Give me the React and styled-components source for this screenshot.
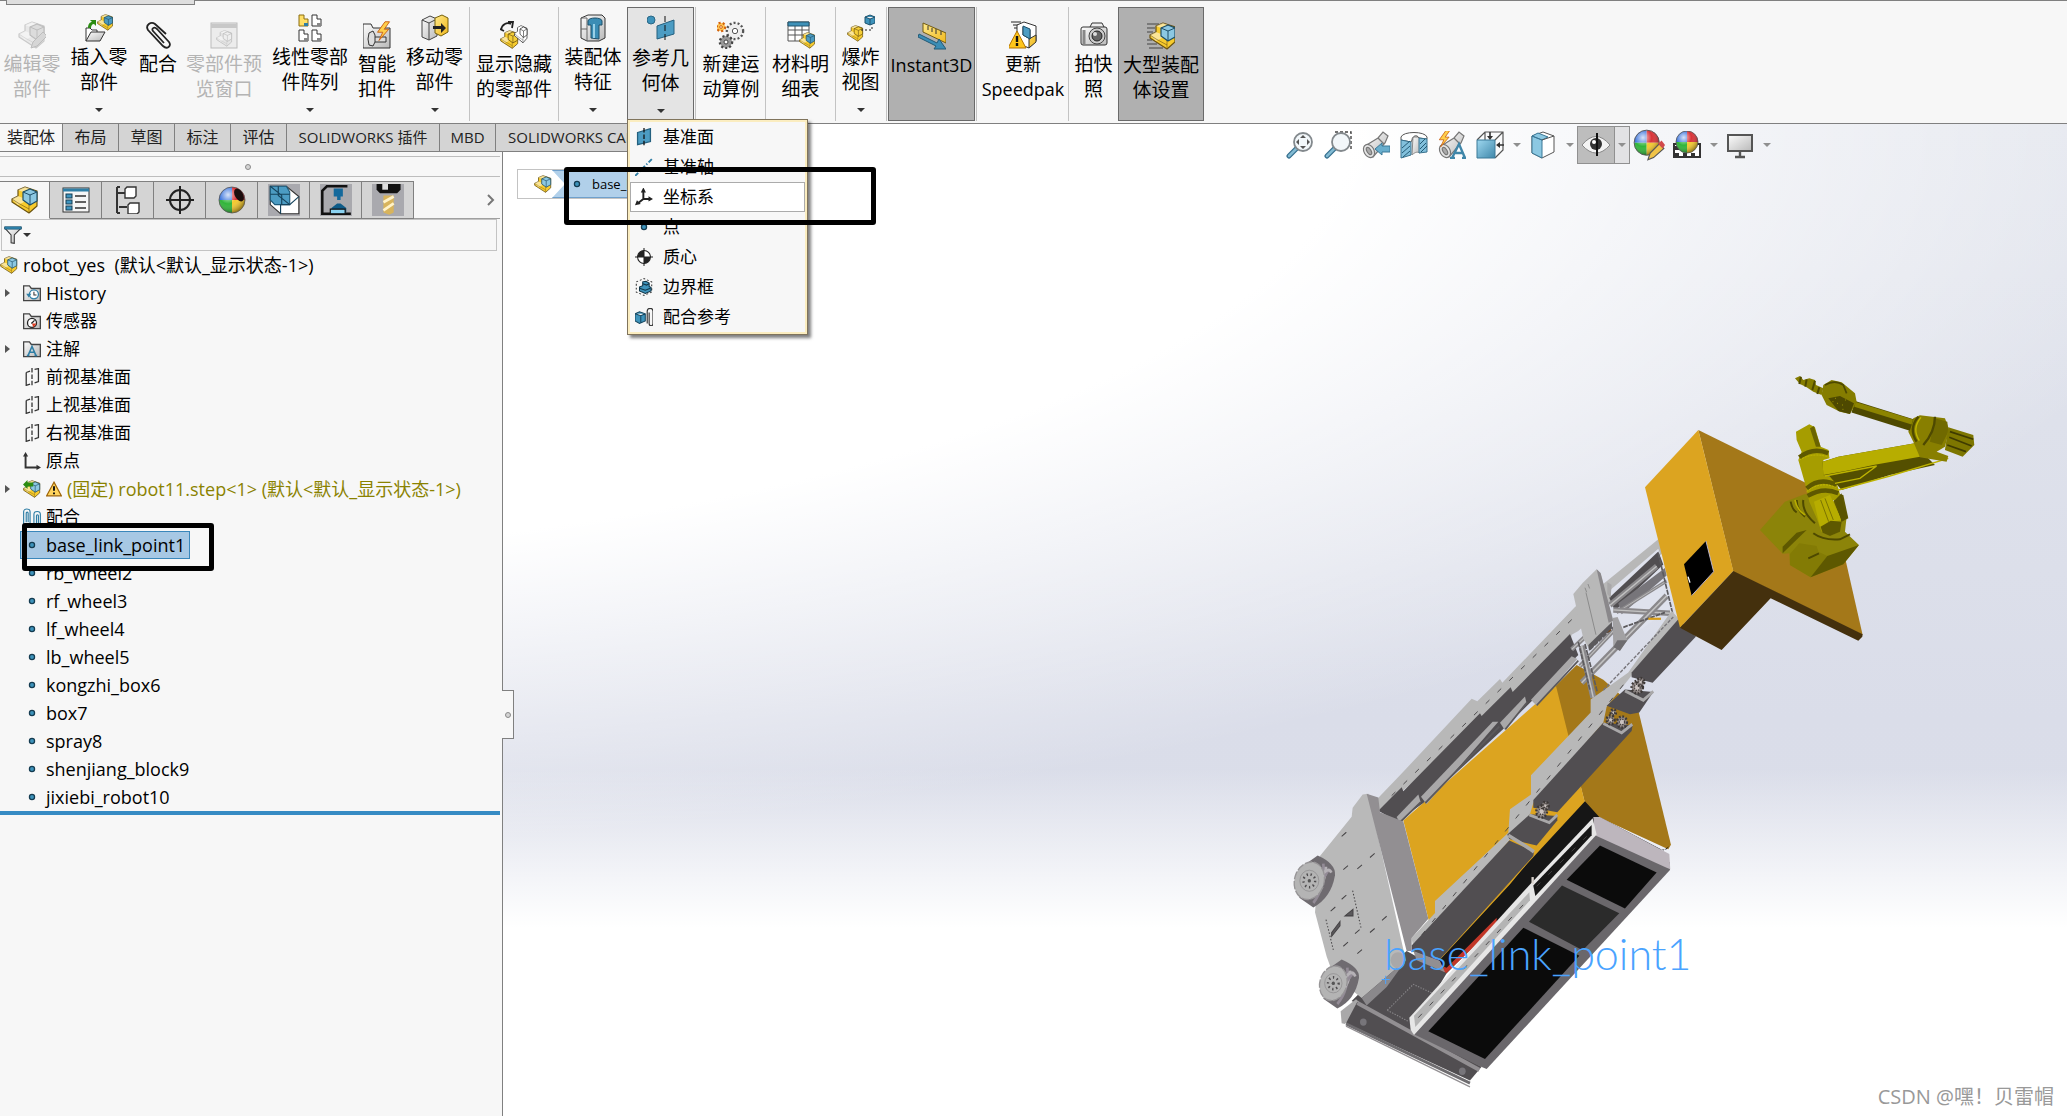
import React, { useState } from "react";
import styled, { createGlobalStyle } from "styled-components";

const GlobalStyle = createGlobalStyle`
  * {
    box-sizing: border-box;
  }
  body {
    margin: 0;
    background: #f7f7f7;
    color: #000;
    font-family: "Open Sans", "Noto Sans CJK SC", sans-serif;
  }
  button, input {
    font: inherit;
    color: inherit;
    margin: 0;
  }
  svg {
    display: block;
    flex: none;
  }
`;

/* ---------- icons ---------- */

const Svg = ({ size = 28, children, ...rest }) => (
  <svg width={size} height={size} viewBox="0 0 28 28" fill="none" aria-hidden="true" {...rest}>
    {children}
  </svg>
);

const HiddenSvg = styled.svg`
  position: absolute;
`;

const Defs = () => (
  <HiddenSvg width="0" height="0" aria-hidden="true">
    <defs>
      <linearGradient id="yel" x1="0" y1="0" x2="1" y2="1">
        <stop offset="0" stopColor="#ffe98a" />
        <stop offset="1" stopColor="#f0b81c" />
      </linearGradient>
      <linearGradient id="blu" x1="0" y1="0" x2="1" y2="1">
        <stop offset="0" stopColor="#9ed8f0" />
        <stop offset="1" stopColor="#3f87aa" />
      </linearGradient>
      <linearGradient id="gry" x1="0" y1="0" x2="1" y2="1">
        <stop offset="0" stopColor="#fdfdfd" />
        <stop offset="1" stopColor="#b9b9b9" />
      </linearGradient>
      <radialGradient id="shine" cx=".35" cy=".3" r=".7">
        <stop offset="0" stopColor="#fff" stopOpacity=".8" />
        <stop offset=".5" stopColor="#fff" stopOpacity="0" />
        <stop offset="1" stopColor="#000" stopOpacity=".35" />
      </radialGradient>
    </defs>
  </HiddenSvg>
);

const Block = ({ body = "#f7cb2d", cube = "#8cc8e2", line = "#6b5310", edge = "#1e4f69" }) => (
  <g strokeLinejoin="round">
    <path d="M1 13l6-3V4l7-3 12 4v15l-8 7L1 16z" fill={body} stroke={line} strokeWidth="1.2" />
    <path d="M1 13l6-3 5 2 1 4-6 3zM7 4l7-3 5 2-7 3z" fill="#fff" fillOpacity=".5" />
    <path d="M1 13l6 4 11 6M18 27v-9" stroke={line} strokeWidth=".6" />
    <path d="M12 6l7-3 7 3v9l-7 4-7-5z" fill={cube} stroke={edge} strokeWidth="1.2" />
    <path d="M12 6l7 3 7-3M19 9v10" stroke={edge} strokeWidth="1" />
  </g>
);

const Bolt = () => (
  <path d="M12 1L2 15h7L4 26 17 11h-6l7-10z" fill="#ffcf4a" stroke="#c65a10" strokeWidth="1.2" />
);

const Lens = () => (
  <>
    <path d="M3 25l7-7" stroke="#356f8f" strokeWidth="5" strokeLinecap="round" />
    <path d="M3 25l7-7" stroke="#82bad2" strokeWidth="2.5" strokeLinecap="round" />
    <circle cx="17" cy="11" r="9" fill="#f2f7fa" stroke="#83898d" strokeWidth="1.8" />
  </>
);

const Scope = () => (
  <g stroke="#777" strokeWidth="1.2">
    <path d="M3 15L16 7l5-6 5 4-3 7-12 14z" fill="url(#gry)" />
    <path d="M16 7l6 6" />
    <ellipse cx="7" cy="20" rx="5" ry="7" transform="rotate(-30 7 20)" fill="#e6e6e6" />
    <ellipse cx="7" cy="20" rx="2" ry="4" transform="rotate(-30 7 20)" fill="#aaa" />
  </g>
);

const Ball = ({ r = 13, cx = 14, cy = 14 }) => (
  <g transform={`translate(${cx} ${cy})`}>
    <path d={`M0 0V${-r}A${r} ${r} 0 0 0 ${-r} 0z`} fill="#3b74dd" />
    <path d={`M0 0H${r}A${r} ${r} 0 0 0 0 ${-r}z`} fill="#d93338" />
    <path d={`M0 0H${-r}A${r} ${r} 0 0 0 0 ${r}z`} fill="#31b53a" />
    <path d={`M0 0V${r}A${r} ${r} 0 0 0 ${r} 0z`} fill="#f4c92e" />
    <circle r={r} fill="url(#shine)" stroke="#555" strokeWidth=".8" />
  </g>
);

const Folder = ({ children }) => (
  <Svg size={18}>
    <path d="M1 26V3h9l3 4h14v19z" fill="url(#gry)" stroke="#444" strokeWidth="2" />
    {children}
  </Svg>
);

const gear = (cx, cy, r, fill, line) => (
  <g>
    <circle cx={cx} cy={cy} r={r} fill={fill} stroke={line} strokeWidth="2.6" strokeDasharray="2 2" />
    <circle cx={cx} cy={cy} r={r - 1} fill={fill} />
    <circle cx={cx} cy={cy} r={r / 3} fill="#fff" stroke={line} />
  </g>
);

const icons = {
  edit: (
    <Svg opacity=".75">
      <Block body="#e4e4e4" cube="#d4d4d4" line="#bbb" edge="#aaa" />
      <path d="M13 27l2-6 10-10 4 4-10 10z" fill="#ccc" stroke="#aaa" />
    </Svg>
  ),
  insert: (
    <Svg>
      <g transform="translate(12 0) scale(.6)"><Block cube="#4b9ac0" /></g>
      <path d="M1 27V14h4l2 2h5v3" fill="#fff" stroke="#333" />
      <path d="M1 27l5-9h14l-5 9z" fill="url(#gry)" stroke="#333" />
      <path d="M3 14c0-4 2-6 4-6L5 6h6v6L9 10c-2 0-3 2-3 4z" fill="#2b8c12" />
    </Svg>
  ),
  clip: (
    <Svg>
      <path
        d="M21 12L10 2C6-1 0 3 3 8l15 16c4 4 9 0 6-4L12 7C9 4 6 7 8 9l11 12"
        transform="translate(1 1)"
        stroke="#222"
        strokeWidth="1.8"
      />
    </Svg>
  ),
  preview: (
    <Svg>
      <rect x="1" y="2" width="26" height="25" fill="#ececec" stroke="#bbb" />
      <path d="M1 5h26" stroke="#c8c8c8" strokeWidth="4" />
      <g transform="translate(6 9) scale(.6)"><Block body="#e4e4e4" cube="#eee" line="#bbb" edge="#bbb" /></g>
    </Svg>
  ),
  pattern: (
    <Svg>
      {[[3, 1], [16, 1], [3, 16], [16, 16]].map(([x, y], i) => (
        <g key={i} transform={`translate(${x} ${y})`}>
          <path d="M0 0h5v4h4v7H0z" fill={i ? "#fff" : "#ffdf65"} stroke={i ? "#333" : "#8a6d10"} />
          <path d="M5 8h4v3H5z" fill={i ? "#888" : "#2f7ea5"} />
        </g>
      ))}
    </Svg>
  ),
  fastener: (
    <Svg>
      <path d="M0 27V3h8l2 4h17v20z" fill="url(#gry)" stroke="#333" />
      <path d="M6 12l4-2 2 4v7l-2 4-4-1-1-6zM12 16h11v5H12" fill="#ddd" stroke="#333" />
      <g transform="translate(13 0) scale(.75)"><Bolt /></g>
    </Svg>
  ),
  move: (
    <Svg>
      <path d="M1 6l8-4 7 3v17l-8 4-7-3z" fill="url(#gry)" stroke="#444" />
      <path d="M1 6l7 3 8-4M8 9v17" stroke="#444" />
      <path d="M14 4l7-3 6 3v14l-7 4-6-3z" fill="url(#yel)" stroke="#75600c" />
      <path d="M12 12h8V9l5 5-5 5v-4h-8z" fill="#222" />
    </Svg>
  ),
  showHide: (
    <Svg>
      <g transform="translate(0 9) scale(.68)"><Block cube="#f5cf38" edge="#6b5310" /></g>
      <g transform="translate(14 4) scale(.5 .66)"><Block body="#fff" cube="#fff" line="#222" edge="#222" /></g>
      <path d="M1 9c1-6 6-8 10-6M12 7L13 1 8 1M4 10L0 8" stroke="#222" strokeWidth="1.8" />
    </Svg>
  ),
  feature: (
    <Svg>
      <path d="M2 4l7-3h14l3 3v20l-6 3H8l-6-3z" fill="url(#gry)" stroke="#333" />
      <path d="M2 4h6v23M2 15h6" stroke="#666" />
      <path d="M9 7c0-4 14-4 14 0v4h-3v14l-8-1V11H9z" fill="#3b8db5" stroke="#1d506b" />
      <path d="M15 10v14" stroke="#99d1e8" strokeWidth="2" />
    </Svg>
  ),
  refGeo: (
    <Svg>
      <circle cx="4" cy="5" r="4" fill="#3e93bb" stroke="#2b6886" />
      <path d="M10 11l17-6v14l-17 5z" fill="#4c9cc3" stroke="#24607f" />
      <path d="M18 1v26" stroke="#111" strokeDasharray="6 3" />
    </Svg>
  ),
  motion: (
    <Svg>
      {gear(18, 10, 8, "#eee", "#555")}
      {gear(9, 21, 6, "#999", "#444")}
      {gear(4, 6, 4, "#ffc552", "#d4640e")}
    </Svg>
  ),
  bom: (
    <Svg>
      <path d="M1 1h21v19H1zM1 9h21M1 14h21M8 5v15M15 5v15" fill="#fff" stroke="#555" />
      <path d="M1 1h21v4H1z" fill="#3f92b9" stroke="#24546d" />
      <g transform="translate(12 11) scale(.6)"><Block cube="#4b9ac0" /></g>
    </Svg>
  ),
  explode: (
    <Svg>
      <g transform="translate(0 11) scale(.6)"><Block cube="#f5cf38" edge="#6b5310" /></g>
      <path d="M18 3l5-2 5 2v6l-5 2-5-2zM18 3l5 2 5-2M23 5v6" fill="#3e93bb" stroke="#1f536e" />
      <path d="M14 16h11v-5" stroke="#222" strokeDasharray="2 2" />
    </Svg>
  ),
  instant: (
    <Svg>
      <path d="M5 1l23 10v10L5 10z" fill="url(#yel)" stroke="#705a12" />
      <path d="M10 4v4M14 6v4M18 7v5M23 9v4" stroke="#333" />
      <path d="M1 12l18 9 2-4 7 10H16l2-3L0 15z" fill="#3b8db5" stroke="#235a76" />
    </Svg>
  ),
  speedpak: (
    <Svg>
      <path d="M2 1h10M4 4h10M5 7h8" stroke="#222" />
      <path d="M8 4l7-3 12 4v15l-7 7-12-5z" fill="#fff" stroke="#333" />
      <path d="M14 6l7 3v9l-7-4zM20 18v9l7-6v-7z" fill="url(#yel)" stroke="#333" />
      <path d="M14 5l7 3v10l-7-4z" fill="#4d9dc4" stroke="#1e4f69" />
      <path d="M8 10l9 17H-1z" fill="#ffc61c" stroke="#b37300" />
      <path d="M8 15v6M8 22v3" stroke="#111" strokeWidth="2.4" />
    </Svg>
  ),
  camera: (
    <Svg>
      <path d="M10 6l2-4h10l2 4" fill="#eee" stroke="#333" />
      <rect x="1" y="6" width="26" height="18" rx="2" fill="url(#gry)" stroke="#333" />
      <path d="M4 9v14" stroke="#888" strokeWidth="3" />
      <circle cx="17" cy="15" r="8" fill="#ccc" stroke="#444" />
      <circle cx="17" cy="15" r="5" fill="#666" stroke="#222" />
      <circle cx="15" cy="13" r="2" fill="#ddd" />
    </Svg>
  ),
  large: (
    <Svg>
      <path d="M0 2h12M0 6h8M0 10h6M0 18h5M0 22h10M2 26h14" stroke="#444" />
      <g transform="translate(2 0)"><Block /></g>
    </Svg>
  ),
  assembly: <Svg><Block /></Svg>,
  assemblySmall: <Svg size={18}><Block /></Svg>,
  properties: (
    <Svg>
      <rect x="1" y="2" width="26" height="24" fill="#f6f6f6" stroke="#333" />
      <path d="M1 4h26" stroke="#2f7ea5" strokeWidth="3" />
      {[8, 14, 20].map((y) => (
        <g key={y}>
          <rect x="4" y={y} width="6" height="4" fill="#3f95bf" stroke="#153c52" />
          <path d={`M13 ${y + 2}h11`} stroke="#222" strokeWidth="1.4" />
        </g>
      ))}
    </Svg>
  ),
  config: (
    <Svg>
      <path d="M3 1v26M3 1h3M3 27h3M3 7h8M5 21h8" stroke="#333" strokeWidth="2" />
      <path d="M11 3l2-2h9v9l-2 2h-9zM14 19l2-2h9v9l-2 2h-9z" fill="#fff" stroke="#333" strokeWidth="1.4" />
    </Svg>
  ),
  target: (
    <Svg>
      <circle cx="14" cy="14" r="10" stroke="#222" strokeWidth="2" />
      <path d="M14 0v28M0 14h28" stroke="#222" strokeWidth="2" />
    </Svg>
  ),
  appearance: (
    <Svg>
      <Ball />
      <ellipse cx="21" cy="9" rx="4" ry="7" transform="rotate(-30 21 9)" fill="#1b0d0d" />
    </Svg>
  ),
  wire: (
    <Svg size={32}>
      <path d="M0 0h28v28H0z" fill="#a9a9ae" />
      <path d="M2 2h14l11 9v15H11L2 18z" fill="#fff" stroke="#333" />
      <path d="M2 2h14l3 5v11H6l-4-4z" fill="#4c9cc3" stroke="#1d5b7b" />
      <path d="M2 2l10 8v8M2 9h17M9 2v8l10 8M11 26V18M11 18l8 0 8-7" stroke="#15435c" />
    </Svg>
  ),
  printer: (
    <Svg size={32}>
      <path d="M0 0h28v28H0z" fill="#a9a9ae" />
      <path d="M24 2H6L2 6v20h4M2 26h25" stroke="#111" strokeWidth="2.2" />
      <path d="M12 4h8v7h-2v3h-3v-3h-3z" fill="#14699c" />
      <path d="M15 17h3l5 4v4H10v-4z" fill="#0e5b88" />
      <path d="M9 22h13v4H9z" fill="#8ad2f1" stroke="#111" />
    </Svg>
  ),
  mill: (
    <Svg size={32}>
      <path d="M0 0h28v28H0z" fill="#a9a9ae" />
      <path d="M4 0h21v5l-3 3H7L4 5z" fill="#111" />
      <path d="M9 0h5v5H9z" fill="#ddd" />
      <path d="M10 10h9v15l-4 2-5-2z" fill="#d8b45c" />
      <path d="M10 16l9-5M10 23l9-6" stroke="#fff3c9" strokeWidth="2.4" />
    </Svg>
  ),
  filter: (
    <Svg size={18}>
      <path d="M1 3l10 11v12l5 1V14L27 3z" fill="url(#gry)" stroke="#333" strokeWidth="1.6" />
      <path d="M1 1h26v4H1z" fill="#2f86b0" stroke="#1a4e69" />
    </Svg>
  ),
  history: (
    <Folder>
      <circle cx="17" cy="16" r="7" fill="#fff" stroke="#2f7ea5" strokeWidth="2" />
      <path d="M17 12v5h4" stroke="#333" strokeWidth="1.6" />
      <path d="M5 15h8l-4 6z" fill="#2f7ea5" />
    </Folder>
  ),
  sensor: (
    <Folder>
      <circle cx="14" cy="17" r="7" fill="#fff" stroke="#222" strokeWidth="2" />
      <path d="M14 18h7l-5 6z" fill="#e03a1e" />
      <path d="M13 18l5-5" stroke="#222" strokeWidth="2" />
    </Folder>
  ),
  notes: (
    <Folder>
      <path d="M8 24l6-14 6 14M10 19h8M6 24h4M18 24h4" stroke="#2f7ea5" strokeWidth="2.4" />
    </Folder>
  ),
  plane: (
    <Svg size={18}>
      <path d="M5 7l6-2M18 2l6-1v20l-6 2M11 25l-6 2V7" stroke="#333" strokeWidth="2" />
      <path d="M14 0v28" stroke="#333" strokeWidth="2" strokeDasharray="7 3" />
    </Svg>
  ),
  origin: (
    <Svg size={18}>
      <path d="M4 4v20h20" stroke="#333" strokeWidth="3" />
      <path d="M4 0L0 7h8zM28 24l-7-4v8z" fill="#333" />
    </Svg>
  ),
  fixed: (
    <Svg size={18}>
      <Block />
      <path d="M0 7l7-7v4h9v6H7v4z" fill="#2b8c12" />
    </Svg>
  ),
  warn: (
    <Svg size={16}>
      <path d="M14 2l13 24H1z" fill="#ffd45e" stroke="#9d6307" strokeWidth="2" />
      <path d="M14 9v8M14 20v3" stroke="#111" strokeWidth="3.4" />
    </Svg>
  ),
  mates: (
    <Svg size={18}>
      <path
        d="M1 28V6c0-6 10-6 10 0v20M5 22V8c0-2 3-2 3 0v14M17 28V10c0-6 10-6 10 0v16M21 24V12c0-2 3-2 3 0v12"
        stroke="#2f7ea5"
        strokeWidth="1.8"
      />
    </Svg>
  ),
  point: (
    <Svg size={18}>
      <circle cx="14" cy="14" r="4" fill="#3e93bb" stroke="#143b50" strokeWidth="2" />
    </Svg>
  ),
  refPlane: (
    <Svg size={18}>
      <path d="M4 7l20-6v20L4 26z" fill="#4c9cc3" stroke="#24607f" strokeWidth="2" />
      <path d="M14 0v28" stroke="#111" strokeWidth="2" strokeDasharray="7 3" />
    </Svg>
  ),
  axis: (
    <Svg size={18}>
      <path d="M0 28L28 0" stroke="#2f7ea5" strokeWidth="3" strokeDasharray="7 3 2 3" />
    </Svg>
  ),
  csys: (
    <Svg size={18}>
      <path d="M13 4v13h11M13 17L4 24" stroke="#222" strokeWidth="3" />
      <path d="M13-1l-4 8h8zM28 17l-7-4v8zM0 27l3-8 6 6z" fill="#222" />
    </Svg>
  ),
  mass: (
    <Svg size={18}>
      <circle cx="14" cy="14" r="10" fill="#fff" stroke="#222" strokeWidth="1.6" />
      <path d="M14 14V4a10 10 0 0 0-10 10zM14 14v10a10 10 0 0 0 10-10z" fill="#222" />
      <path d="M14 0v28M0 14h28" stroke="#222" strokeWidth="1.6" />
    </Svg>
  ),
  bounds: (
    <Svg size={18}>
      <path d="M2 6l12-5 12 5v16l-12 5-12-5z" stroke="#333" strokeWidth="1.6" strokeDasharray="3 3" />
      <path d="M7 14l5-2V6l5-1 5 3v5l3 2v5l-9 4-9-4z" fill="#3e93bb" stroke="#0f3447" strokeWidth="1.6" />
      <path d="M12 9l6 2 4-2M7 16l9 3 8-3" stroke="#0f3447" strokeWidth="1.6" />
    </Svg>
  ),
  mateRef: (
    <Svg size={18}>
      <path d="M0 9l7-3 9 3v11l-9 4-7-4zM0 9l9 3 7-3M9 12v11" fill="#3e93bb" stroke="#15455e" strokeWidth="1.6" />
      <path d="M19 24V5c0-6 9-6 9 0v19c0 5-6 5-6 0V7" stroke="#333" strokeWidth="1.8" />
    </Svg>
  ),
  zoomFit: (
    <Svg>
      <Lens />
      <path d="M17 4l3 3h-6zM17 18l3-3h-6zM10 11l3-3v6zM24 11l-3-3v6z" fill="#555" />
    </Svg>
  ),
  zoomArea: (
    <Svg>
      <path d="M11 1h16v17" stroke="#444" strokeWidth="1.4" strokeDasharray="3 2" />
      <Lens />
    </Svg>
  ),
  prevView: (
    <Svg>
      <Scope />
      <path d="M13 18l7-6v3h8v6h-8v3z" fill="#69aecd" stroke="#3a7897" />
    </Svg>
  ),
  section: (
    <Svg>
      <path d="M13 6h7v16c-3-2-6 0-8 2z" fill="url(#gry)" stroke="#888" />
      <path d="M1 9V6C3 0 25 0 27 6v2l-8-1c-2-4-7-2-7 2l-1 2z" fill="#fff" stroke="#555" />
      <path d="M1 9l10 2v13L1 27zM19 7l8 1v13l-8 1z" fill="#82c0dc" stroke="#38718d" />
      <path d="M2 17l8-7M2 22l8-7M3 26l7-6M20 13l5-5M20 18l6-6M21 21l6-6" stroke="#245a75" />
    </Svg>
  ),
  dynamic: (
    <Svg>
      <Scope />
      <g transform="translate(0 -1) scale(.65)"><Bolt /></g>
      <path d="M14 27l7-14 6 14M16 22h9M12 27h5M24 27h5" stroke="#3f86a9" strokeWidth="2.4" />
    </Svg>
  ),
  orient: (
    <Svg>
      <path d="M1 9L9 1h18v18l-8 8M27 1l-8 8M9 1v8" stroke="#555" strokeWidth="1.2" />
      <path d="M1 9h18v18H1z" fill="url(#blu)" stroke="#3a7897" />
      <path d="M14 1v5M28 14h-5" stroke="#333" strokeWidth="1.6" />
      <path d="M11 5h6l-3 4zM20 14l4-3v6z" fill="#333" />
    </Svg>
  ),
  display: (
    <Svg>
      <path d="M3 5l11-4 11 4v16l-12 6-10-5z" fill="#fff" stroke="#555" />
      <path d="M3 5l10 4v18L3 22zM3 5l6-3 10 4-6 3z" fill="#8cc8e2" stroke="#3a7897" />
      <path d="M13 9l12-4" stroke="#555" />
    </Svg>
  ),
  eye: (
    <Svg>
      <path d="M0 14Q14-3 28 14Q14 30 0 14z" fill="#f4f4f4" stroke="#888" />
      <circle cx="14" cy="13" r="6" fill="#333" />
      <circle cx="12" cy="11" r="2" fill="#fff" />
      <path d="M15 2v23" stroke="#111" strokeWidth="2" />
    </Svg>
  ),
  editLook: (
    <Svg size={32}>
      <Ball cx={12} cy={12} r={11} />
      <path d="M13 27l2-6 8-8 4 4-9 8z" fill="#f0c348" stroke="#555" />
      <path d="M22 13l3-3 3 4-2 3z" fill="#d1494b" />
    </Svg>
  ),
  scene: (
    <Svg>
      <path d="M1 13h26v13H1z" fill="#fff" stroke="#333" strokeWidth="2" />
      <path d="M2 17h25M2 24h25" stroke="#333" strokeWidth="4" strokeDasharray="4 4" />
      <Ball cx={14} cy={11} r={11} />
    </Svg>
  ),
  monitor: (
    <Svg>
      <rect x="2" y="4" width="24" height="16" fill="url(#gry)" stroke="#555" strokeWidth="2" />
      <path d="M14 20v5M9 26h10" stroke="#555" strokeWidth="2.4" />
    </Svg>
  ),
};

/* ---------- ribbon ---------- */

const Page = styled.div`
  display: flex;
  flex-direction: column;
  min-height: 100vh;
  overflow: hidden;
`;

const Ribbon = styled.header`
  position: relative;
  z-index: 2;
  display: flex;
  height: 124px;
  padding-top: 6px;
  padding-bottom: 2px;
  background: #f7f7f7;
  border-top: 1px solid #808080;
  border-bottom: 1px solid #808080;
`;

const WindowEdge = styled.div`
  position: absolute;
  top: -1px;
  left: 6px;
  width: 189px;
  height: 5px;
  background: #dedede;
  border: 1px solid #808080;
  border-top: 0;
`;

const Divider = styled.span`
  width: 1px;
  margin: 0 ${(p) => p.$gap || 0}px;
  background: #c3c3c3;
`;

const Slot = styled.div`
  position: relative;
  display: flex;
  width: ${(p) => p.$w}px;
`;

const Tool = styled.button`
  display: flex;
  flex: 1;
  flex-direction: column;
  align-items: center;
  gap: 3px;
  padding: ${(p) => (p.$arrow ? 7 : 14)}px 0 0;
  border: ${(p) => (p.$on ? 1 : 0)}px solid #6a6a6a;
  background: ${(p) => ({ menu: "#e4e4e4", press: "#b0b0b0" })[p.$on] || "none"};
  color: #000;
  font-size: ${(p) => (p.$latin ? 18 : 19)}px;
  line-height: 25px;
  white-space: pre;

  &:disabled {
    color: #b4b4b4;
  }
`;

const Caret = styled.span`
  width: 0;
  border: 4px solid transparent;
  border-top-color: ${(p) => p.$color || "#333"};
  border-bottom: 0;
`;

const ToolCaret = styled(Caret)`
  margin-top: 10px;
`;

const tools = [
  { icon: "edit", label: "编辑零\n部件", w: 64, disabled: true },
  { icon: "insert", label: "插入零\n部件", w: 70, arrow: true },
  { icon: "clip", label: "配合", w: 48 },
  { icon: "preview", label: "零部件预\n览窗口", w: 84, disabled: true },
  { icon: "pattern", label: "线性零部\n件阵列", w: 88, arrow: true },
  { icon: "fastener", label: "智能\n扣件", w: 46 },
  { icon: "move", label: "移动零\n部件", w: 69, arrow: true },
  { divider: true },
  { icon: "showHide", label: "显示隐藏\n的零部件", w: 88 },
  { divider: true },
  { icon: "feature", label: "装配体\n特征", w: 68, arrow: true },
  { icon: "refGeo", label: "参考几\n何体", w: 67, arrow: true, on: "menu" },
  { divider: true, gap: 1 },
  { icon: "motion", label: "新建运\n动算例", w: 68 },
  { divider: true },
  { icon: "bom", label: "材料明\n细表", w: 69 },
  { divider: true },
  { icon: "explode", label: "爆炸\n视图", w: 49, arrow: true },
  { divider: true, gap: 1 },
  { icon: "instant", label: "Instant3D", w: 87, on: "press", latin: true },
  { divider: true, gap: 1 },
  { icon: "speedpak", label: "更新\nSpeedpak", w: 90, latin: true },
  { divider: true },
  { icon: "camera", label: "拍快\n照", w: 49 },
  { icon: "large", label: "大型装配\n体设置", w: 86, on: "press" },
];

const Menu = styled.div`
  position: absolute;
  top: 112px;
  left: 0;
  width: 181px;
  padding: 2px 1px;
  background: #f7f7f7;
  border: 1px solid #80745c;
  box-shadow: inset 0 0 0 2px #fbedc0, 3px 3px 3px #00000080;
`;

const MenuItem = styled.button`
  display: flex;
  align-items: center;
  gap: 10px;
  width: calc(100% - 2px);
  height: 30px;
  margin: 0 1px;
  padding: 0 4px;
  border: 1px solid ${(p) => (p.$hot ? "#ababab" : "transparent")};
  background: ${(p) => (p.$hot ? "#fff" : "none")};
  font-size: 17px;
  line-height: 24px;
`;

const menuItems = [
  ["refPlane", "基准面"],
  ["axis", "基准轴"],
  ["csys", "坐标系"],
  ["point", "点"],
  ["mass", "质心"],
  ["bounds", "边界框"],
  ["mateRef", "配合参考"],
];

/* ---------- body ---------- */

const Body = styled.main`
  position: relative;
  display: grid;
  flex: 1;
  grid-template-columns: 503px 1fr;
  grid-template-rows: 28px 1fr;
  background:
    linear-gradient(180deg, #ffffff00 65%, #ffffff80 73%, #fff 81%),
    radial-gradient(109% 74% at 0% 0%, #fff 60%, #ffffff00 100%),
    linear-gradient(180deg, #e2e5ed 0%, #dadde9 60%, #dcdfea 100%);
`;

const Tabs = styled.nav`
  z-index: 1;
  grid-column: 1 / 3;
  grid-row: 1;
  justify-self: start;
  display: flex;
  margin-top: -1px;
`;

const Tab = styled.button`
  width: ${(p) => p.$w}px;
  padding: 0 0 2px;
  border: 1px solid #808080;
  border-left-width: 0;
  background: #d4d4d4;
  color: #222;
  font-size: ${(p) => (p.$latin ? 15 : 16)}px;
  line-height: 24px;
  white-space: nowrap;

  &[aria-selected="true"] {
    border-top-color: #f7f7f7;
    background: #f7f7f7;
  }
`;

const ClippedTab = styled(Tab)`
  padding-left: 12px;
  overflow: hidden;
  text-align: left;
`;

const tabs = [
  ["装配体", 63],
  ["布局", 56],
  ["草图", 56],
  ["标注", 56],
  ["评估", 56],
  ["SOLIDWORKS 插件", 153, true],
  ["MBD", 56, true],
];

const Sidebar = styled.aside`
  position: relative;
  grid-column: 1;
  grid-row: 2;
  background: #f7f7f7;
  border-right: 1px solid #808080;
`;

const Grip = styled.div`
  display: flex;
  align-items: center;
  justify-content: center;
  height: 21px;
  margin: 4px 2px 0 0;
  padding-right: 4px;
  border-top: 1px solid #bdbdbd;
  border-bottom: 1px solid #bdbdbd;
`;

const Dot = styled.span`
  width: 6px;
  height: 6px;
  border: 1px solid #8a8a8a;
  border-radius: 50%;
  background: #d4d4d4;
`;

const PanelTabs = styled.div`
  display: flex;
  height: 38px;
  margin: 4px 2px 0 0;
  border-bottom: 1px solid #a0a0a0;
`;

const PanelTab = styled.button`
  display: flex;
  align-items: center;
  justify-content: center;
  width: ${(p) => (p.$on ? 50 : 52)}px;
  height: 38px;
  padding: 0;
  border: 1px solid #808080;
  border-left: 0;
  border-bottom-color: ${(p) => (p.$on ? "#f7f7f7" : "#808080")};
  background: ${(p) => (p.$on ? "#f7f7f7" : "#d4d4d4")};
`;

const More = styled.button`
  margin-left: auto;
  padding: 0 4px 0 0;
  border: 0;
  background: none;
`;

const Filter = styled.label`
  display: flex;
  align-items: center;
  gap: 1px;
  height: 32px;
  margin: 0 5px 0 1px;
  padding: 0 2px;
  border: 1px solid #c3c3c3;
`;

const FilterInput = styled.input`
  flex: 1;
  border: 0;
  outline: 0;
  background: none;
  font-size: 17px;
`;

const Tree = styled.ul`
  margin: 0 2px 0 0;
  padding: 0;
  border-bottom: 4px solid #368bc4;
  list-style: none;
`;

const Row = styled.li`
  display: flex;
  align-items: center;
  height: 28px;
  padding-left: ${(p) => (p.$root ? 0 : 5)}px;
`;

const Expand = styled.span`
  width: 15px;
  flex: none;

  &::before {
    content: "";
    display: ${(p) => (p.$show ? "block" : "none")};
    width: 0;
    border: 4px solid transparent;
    border-left: 5px solid #555;
    border-right: 0;
  }
`;

const Node = styled.button`
  display: flex;
  align-items: center;
  gap: 5px;
  height: 28px;
  padding: 0 4px 0 ${(p) => (p.$root ? 0 : 2)}px;
  border: 1px solid ${(p) => (p.$selected ? "#3a87bb" : "transparent")};
  border-left-width: ${(p) => (p.$root ? 0 : 1)}px;
  background: ${(p) => (p.$selected ? "#a7c8e4" : "none")};
  color: ${(p) => (p.$warn ? "#8a8200" : "#000")};
  font-size: ${(p) => (p.$latin ? 18 : 17)}px;
  line-height: 26px;
  white-space: pre;
`;

const tree = [
  { icon: "assemblySmall", label: "robot_yes  (默认<默认_显示状态-1>)", root: true, latin: true },
  { icon: "history", label: "History", open: true, latin: true },
  { icon: "sensor", label: "传感器" },
  { icon: "notes", label: "注解", open: true },
  { icon: "plane", label: "前视基准面" },
  { icon: "plane", label: "上视基准面" },
  { icon: "plane", label: "右视基准面" },
  { icon: "origin", label: "原点" },
  { icon: "fixed", label: "(固定) robot11.step<1> (默认<默认_显示状态-1>)", open: true, warn: true, latin: true },
  { icon: "mates", label: "配合" },
  ...[
    "base_link_point1",
    "rb_wheel2",
    "rf_wheel3",
    "lf_wheel4",
    "lb_wheel5",
    "kongzhi_box6",
    "box7",
    "spray8",
    "shenjiang_block9",
    "jixiebi_robot10",
  ].map((label) => ({ icon: "point", label, latin: true })),
];

const Handle = styled.button`
  position: absolute;
  top: 538px;
  right: -12px;
  display: flex;
  align-items: center;
  justify-content: center;
  width: 12px;
  height: 49px;
  padding: 0;
  border: 1px solid #808080;
  border-left: 0;
  background: #f7f7f7;
`;

const Mark = styled.div`
  position: absolute;
  z-index: 3;
  top: ${(p) => p.$y}px;
  left: ${(p) => p.$x}px;
  width: ${(p) => p.$w}px;
  height: ${(p) => p.$h}px;
  border: 5px solid #000;
  border-radius: 3px;
  pointer-events: none;
`;

const Viewport = styled.section`
  grid-column: 2;
  grid-row: 2;
  padding: 17px 14px;
`;

const Crumbs = styled.div`
  display: flex;
  width: 200px;
  height: 30px;
  border: 1px solid #c3c3c3;
`;

const CrumbRoot = styled.button`
  display: flex;
  align-items: center;
  padding: 0 0 0 16px;
  border: 0;
  background: none;
`;

const Crumb = styled.button`
  display: flex;
  flex: 1;
  align-items: center;
  gap: 6px;
  padding: 0 0 0 16px;
  border: 1px solid #6fa0cc;
  border-left: 0;
  background: #b1d0ea;
  clip-path: polygon(0 0, 100% 0, 100% 100%, 0 100%, 13px 50%);
  font-size: 13px;
`;

const HeadsUp = styled.div`
  z-index: 1;
  grid-column: 2;
  grid-row: 1;
  justify-self: end;
  display: flex;
  align-items: center;
  height: 40px;
  margin-top: 1px;
  padding-right: 293px;
`;

const ViewTool = styled.button`
  display: flex;
  align-items: center;
  justify-content: center;
  width: 38px;
  height: 38px;
  padding: 0;
  border: ${(p) => (p.$on ? 1 : 0)}px solid #909090;
  background: ${(p) => (p.$on ? "#bdbdbd" : "none")};
`;

const ViewCaret = styled.button`
  display: flex;
  align-items: center;
  justify-content: center;
  width: 15px;
  height: 38px;
  padding: 0;
  border: ${(p) => (p.$on ? 1 : 0)}px solid #909090;
  border-left: 0;
  background: ${(p) => (p.$on ? "#e2e2e4" : "none")};
`;

const viewTools = [
  ["zoomFit", "整屏显示全图"],
  ["zoomArea", "局部放大"],
  ["prevView", "上一视图"],
  ["section", "剖面视图"],
  ["dynamic", "动态注解视图"],
  ["orient", "视图定向", "caret"],
  ["display", "显示样式", "caret"],
  ["eye", "隐藏/显示项目", "on"],
  ["editLook", "编辑外观"],
  ["scene", "应用布景", "caret"],
  ["monitor", "视图设定", "caret"],
];

const Canvas = styled.svg`
  position: absolute;
  top: 226px;
  right: 67px;
`;

const Watermark = styled.span`
  position: absolute;
  right: 13px;
  bottom: 6px;
  color: #999;
  font-size: 20px;
  line-height: 26px;
`;

/* ---------- model ---------- */

const P = ({ d, f, ...rest }) => <polygon points={d} fill={f} {...rest} />;

const Rod = ({ d, w = 12, c = "#8a888b" }) => (
  <>
    <path d={d} stroke={c} strokeWidth={w} fill="none" />
    <path d={d} stroke="#c2c2c2" strokeWidth={w / 4} fill="none" />
  </>
);

const Slots = ({ d }) => (
  <path d={d} stroke="#454345" strokeWidth="2.6" strokeDasharray="15 32" fill="none" />
);

const Sprocket = ({ x, y, r = 18 }) => (
  <g transform={`translate(${x} ${y})`}>
    <circle r={r} fill="#8d8583" stroke="#3d3836" strokeWidth="7" strokeDasharray="5 5" />
    <circle r={r / 2} fill="#cbc3c0" stroke="#3d3836" strokeWidth="3" strokeDasharray="4 3" />
  </g>
);

const Wheel = ({ x, y, r }) => (
  <g transform={`translate(${x} ${y})`}>
    <path d={`M-10 ${-r}L25 ${-r - 22}Q80 ${-r} 77 -15Q66 45 12 ${r + 26}L-30 ${r}z`} fill="#6f6b70" />
    {[0, 1, 2, 3].map((i) => (
      <path
        key={i}
        d={`M${12 + i * 6} ${r + 14 - i * 22}Q${48 + i * 3} ${18 - i * 20} ${42 + i * 8} ${-r + i * 8}`}
        stroke={i % 2 ? "#b5b1b6" : "#938b96"}
        strokeWidth="8"
        fill="none"
      />
    ))}
    <ellipse rx={r - 2} ry={r + 6} transform="rotate(25)" fill="#b4b4b4" stroke="#979597" strokeWidth="4" strokeDasharray="22 5" />
    <circle r={r * 0.62} fill="none" stroke="#8d8b8d" strokeWidth="2" />
    <circle r={r * 0.38} fill="none" stroke="#4e4c4e" strokeWidth="7" strokeDasharray="4 8" />
    <circle r="5" fill="#555" />
  </g>
);

const Chassis = () => (
  <g transform="translate(1270 520) scale(.3333 .37)">
    {/* tank */}
    <P d="855,450 920,392 1000,432 1105,515 1203,878 1195,890 985,803 945,765" f="#a47819" />
    <P d="400,812 858,448 900,600 945,765 505,1190 475,1078" f="#dca420" />
    <P d="945,760 988,803 1180,893 1197,882 1190,890 1165,892 975,820 530,1225 500,1222 505,1190" f="#161616" />
    <path d="M510 1186L718 984L790 905" stroke="#dca420" strokeWidth="4" fill="none" />
    <P d="510,1203 530,1210 680,1075 680,1095 528,1226 512,1220" f="#c23728" />

    {/* far rail */}
    <P d="315,760 390,690 605,483 622,490 690,430 697,440 915,235 1165,52 1178,90 925,300 905,310 900,335 325,790" f="#b8b8b8" />
    <P d="325,786 395,722 400,733 630,522 635,530 722,452 728,465 900,308 925,365 700,565 460,765 382,815" f="#514e51" />
    <P d="380,803 445,742 452,762 390,820" f="#a9a8a9" />
    <P d="453,748 668,545 685,545 470,768" f="#a9a8a9" />
    <P d="690,548 765,477 770,495 705,568" f="#a9a8a9" />
    <P d="783,486 905,368 922,376 800,502" f="#a9a8a9" />
    <path d="M466 765L688 558M390 817L452 763M706 566L772 492M800 501L925 380" stroke="#5b595c" strokeWidth="5" />
    <Slots d="M365 745L910 265" />

    {/* lift */}
    <P d="1020,190 1165,78 1200,170 1200,240 1060,330 1030,260" f="#dfe2ed" />
    <P d="1018,210 1165,85 1180,120 1035,245" f="#514e51" />
    <P d="1045,225 1185,130 1190,150 1055,255" f="#77757a" />
    <Rod d="M1020 230L1160 125" w={16} />
    <Rod d="M1040 250L1190 165" w={9} />
    <Rod d="M1030 243L1200 252" w={15} />
    <Rod d="M935 440L1190 205" w={17} />
    <Rod d="M930 395L1040 290" w={12} />
    <Rod d="M905 350L1000 270" w={13} />
    <Rod d="M935 340L970 480" w={18} />
    <path d="M960 350L1030 290M1060 290L1185 250M925 330L960 460M945 335L982 465M1165 90L1210 260" stroke="#5d5b5e" strokeWidth="5" strokeDasharray="14 3" />
    <path d="M1135 267h38" stroke="#d59b19" strokeWidth="6" />
    <P d="1000,310 1025,280 1022,300" f="#7c430c" />
    <P d="910,200 938,170 980,133 992,145 1028,270 1025,285 958,350 940,320" f="#b8b8b8" />
    <P d="980,133 992,143 1030,272 1016,278" f="#8a888b" />
    <P d="1026,276 1026,292 957,354 955,338" f="#5b595c" />
    <path d="M945 183l5 12M954 173l5 12M948 196L978 310" stroke="#777" strokeWidth="2" fill="none" />
    <P d="1012,168 1025,175 1022,210 1012,200" f="#a9a8a9" />
    <P d="1028,265 1043,262 1072,325 1050,352 1030,342" f="#a2a1a3" />
    <P d="1042,325 1072,325 1050,354 1030,343" f="#6e6c6f" />

    {/* near rail */}
    <P d="425,1130 495,1062 495,1030 715,845 720,782 783,742 783,690 962,520 962,485 1075,412 1205,245 1228,268 1228,292 1085,420 1010,505 1000,548 790,765 780,795 718,866 430,1160" f="#b8b8b8" />
    <P d="425,1150 718,866 792,896 790,908 505,1192 425,1165" f="#514e51" />
    <P d="712,850 780,795 862,800 862,812 800,880 718,862" f="#514e51" />
    <P d="790,757 1000,548 1088,555 1085,570 862,790 790,778" f="#514e51" />
    <P d="1010,502 1065,458 1150,465 1108,520 1080,525" f="#514e51" />
    <P d="1085,412 1225,268 1278,315 1148,440 1085,425" f="#514e51" />
    <path d="M715 852L778 888L792 897" stroke="#a9a8a9" strokeWidth="10" />
    <path d="M778 797L838 818L862 797M1000 550L1055 575L1087 552M1065 462L1120 487L1150 463" stroke="#a9a8a9" strokeWidth="8" fill="none" />
    <path d="M1000 460L1210 262" stroke="#77757a" strokeWidth="4" strokeDasharray="10 4" />
    <Slots d="M455 1122L1065 440" />
    <Sprocket x={815} y={788} r={16} />
    <Sprocket x={826} y={772} r={10} />
    <Sprocket x={1022} y={540} r={12} />
    <Sprocket x={1056} y={546} r={15} />
    <Sprocket x={1030} y={520} r={8} />
    <Sprocket x={1102} y={452} r={17} />
    <Sprocket x={1112} y={438} r={11} />

    {/* base */}
    <P d="410,1165 530,1225 480,1300 430,1392 245,1300 290,1260" f="#514e51" />
    <P d="430,1165 510,1192 525,1222 440,1190" f="#928f92" />
    <P d="150,908 245,802 248,778 278,742 295,740 400,1160 408,1190 275,1292 190,1230 170,1180 135,1060" f="#b9b9b9" />
    <P d="275,1292 408,1190 350,1262 290,1312" f="#8a888b" />
    <P d="290,740 325,750 330,790 400,815 475,1078 425,1130 425,1165 410,1165" f="#928f92" />
    <circle cx="384" cy="1190" r="22" fill="#a9a8a9" />
    <path d="M185 1115l25-30v12l-25 28zM225 1070l24-18v18z" stroke="#454345" strokeWidth="3" fill="#5b595c" />
    <path d="M168 1080l22 82M248 1002l25 100" stroke="#454345" strokeWidth="3" strokeDasharray="4 5" />
    <path d="M215 855l14-11M220 945l14-11M262 943l14-11M215 1025l14-11M182 1057l14-11M300 912l14-11M255 1118l14-11M220 1152l14-11M262 1172l14-11M300 1115l14-11M336 1082l14-11" stroke="#454345" strokeWidth="3" />
    <path d="M352 1325L430 1255L490 1280M352 1325L415 1355" stroke="#8a888b" strokeWidth="3" strokeDasharray="4 4" fill="none" />
    <Wheel x={118} y={975} r={46} />
    <Wheel x={190} y={1252} r={42} />

    {/* bottom bar */}
    <P d="212,1328 258,1295 270,1305 262,1325 225,1362 215,1360" f="#a9a8a9" />
    <P d="262,1302 635,1478 600,1515 228,1360" f="#514e51" />
    <path d="M262 1305L628 1486" stroke="#928f92" strokeWidth="11" />
    <path d="M228 1362L600 1522" stroke="#6e6c6f" strokeWidth="8" />
    <path d="M228 1368L600 1532" stroke="#928f92" strokeWidth="4" />
    <circle cx="280" cy="1357" r="10" fill="#77757a" />
    <circle cx="577" cy="1490" r="10" fill="#77757a" />

    {/* cabinet */}
    <P d="432,1390 975,848 1200,925 1200,946 650,1484 628,1476" f="#6a676b" />
    <P d="970,803 990,803 1198,903 1201,944 1190,940 975,852" f="#bdb6bd" />
    <P d="418,1345 780,985 968,806 980,850 432,1392 422,1378" f="#e6e6e6" />
    <P d="432,1340 778,1006 780,1028 436,1370" f="#b4b4b4" />
    <P d="790,988 965,824 965,852 796,1016" f="#161616" />
    <Slots d="M445 1345L770 1030M800 990L950 855" />
    <P d="990,880 1160,953 1065,1050 890,972" f="#0b0b0b" />
    <P d="876,988 1048,1063 938,1163 777,1086" f="#2b2b2b" />
    <P d="760,1102 928,1178 645,1457 475,1382" f="#0b0b0b" />
    <path d="M788 965v18" stroke="#d8d2cc" strokeWidth="7" />
    <path d="M335 1242h24M347 1232v22" stroke="#4aa3ff" strokeWidth="3" />
  </g>
);

const Arm = () => (
  <g transform="translate(1540 350) scale(.3333)">
    {/* cabin */}
    <P d="475,240 800,400 910,600 968,855 580,665" f="#a47819" />
    <P d="475,240 580,663 420,833 315,412" f="#dca420" />
    <P d="580,663 968,853 967,860 955,872 692,745 545,900 420,833" f="#44300d" />
    <P d="432,643 498,573 521,665 455,737" f="#000" />
    <path d="M498 573L521 665L455 737" stroke="#b9b2c8" strokeWidth="3" fill="none" />
    <path d="M444 680l6 18" stroke="#fff" strokeWidth="4" />

    {/* foot */}
    <P d="660,540 735,455 795,432 840,450 920,500 915,545 957,585 910,643 812,682 750,645 748,610 728,611" f="#8c8409" />
    <P d="728,610 800,540 770,548 728,590" f="#5e5800" />
    <P d="750,612 778,580 830,588 835,605 862,618 815,680 812,682 750,645" f="#837b05" />
    <P d="862,618 957,585 910,643 812,682" f="#5e5800" />
    <path d="M752 455q5 25 18 32M770 450q0 30 25 50M790 450q-5 35 35 70M805 625l32-15M820 550q30 22 80 18l30-15" stroke="#4e4900" strokeWidth="6" fill="none" />
    <path d="M765 450q5 30 30 45" stroke="#b7ad00" strokeWidth="5" fill="none" />

    {/* shoulder */}
    <P d="885,430 910,435 925,505 905,515 880,470" f="#5e5800" />
    <P d="768,245 808,223 825,232 842,290 866,300 868,325 850,330 852,375 885,385 895,415 905,450 880,450 903,510 898,545 870,558 845,545 830,505 808,455 795,400 775,330 785,305 770,270" f="#a69d00" />
    <P d="822,228 842,290 828,290 810,235" f="#6a6400" />
    <path d="M778 322Q820 290 865 310M800 415Q840 380 890 405M803 438Q850 410 895 430" stroke="#5e5800" strokeWidth="13" fill="none" />
    <path d="M778 330Q820 305 868 322M800 425Q840 392 888 412" stroke="#c1b700" strokeWidth="3" fill="none" strokeDasharray="6 3" />
    <P d="822,455 870,435 905,510 875,515 840,530" f="#b7ad00" />
    <path d="M855 445L880 510M842 450L866 515" stroke="#7a7300" strokeWidth="3" />
    <P d="842,530 872,512 905,515 900,545 870,558 848,548" f="#5e5800" />
    <P d="905,430 910,470 923,500 905,515 885,450" f="#5a5400" />

    {/* upper arm */}
    <P d="848,335 895,320 1125,280 1150,310 1185,345 1050,375 905,420 870,380 850,375" f="#544f00" />
    <P d="848,335 895,320 1125,280 1145,285 1140,320 1000,345 920,362 850,375" f="#b7ad00" />
    <path d="M855 378L1010 348L960 385L885 400M895 420L1050 378L1225 325" stroke="#bdb300" strokeWidth="4" fill="none" />

    {/* elbow */}
    <P d="1120,275 1105,245 1120,205 1140,196 1215,205 1228,240 1215,290 1190,305 1225,318 1220,335 1140,322" f="#887f00" />
    <P d="1185,205 1222,215 1225,245 1205,285 1170,275" f="#706900" />
    <path d="M1135 200Q1105 235 1130 275M1185 200Q1185 245 1150 285" stroke="#4e4900" strokeWidth="7" fill="none" />
    <path d="M1143 202Q1115 235 1138 272" stroke="#c1b700" strokeWidth="4" fill="none" />
    <P d="1225,232 1300,255 1303,285 1268,320 1215,300" f="#7d7600" />
    <path d="M1230 245L1300 268M1228 262L1295 288M1222 285L1278 305" stroke="#3f3b00" strokeWidth="5" />

    {/* forearm */}
    <path d="M940 170L1115 225" stroke="#4e4900" strokeWidth="36" />
    <path d="M945 163L1117 216" stroke="#8c8400" strokeWidth="15" />
    <P d="845,135 850,105 875,90 905,97 945,130 950,155 930,192 900,185 860,165" f="#857d00" />
    <P d="865,145 900,138 942,160 930,192 895,183" f="#4e4900" />
    <path d="M878 155h2M892 160h2M906 165h2M915 150h2M885 145h2M908 178h2" stroke="#c1b700" strokeWidth="3" />
    <path d="M855 105Q885 88 910 105L920 130" stroke="#4e4900" strokeWidth="5" fill="none" />
    <P d="765,85 780,78 790,90 808,85 825,90 828,105 850,115 845,135 820,125 800,112 780,102" f="#857d00" />
    <path d="M783 80l-5 22M800 88l-4 22M825 92l-8 28M838 112l-6 20" stroke="#4e4900" strokeWidth="6" />
  </g>
);

const Model = () => (
  <Canvas width="730" height="766" viewBox="1270 350 730 766" role="img" aria-label="robot_yes">
    <Chassis />
    <Arm />
    <text x="1384" y="970" fontSize="43" fontWeight="300" fill="#4aa3ff" fontFamily="Lato, sans-serif">
      base_link_point1
    </text>
  </Canvas>
);

/* ---------- app ---------- */

function App() {
  const [tab, setTab] = useState("装配体");
  const [selected, setSelected] = useState("base_link_point1");

  return (
    <Page>
      <GlobalStyle />
      <Defs />
      <Ribbon>
        <WindowEdge />
        {tools.map((t, i) =>
          t.divider ? (
            <Divider key={i} $gap={t.gap} />
          ) : (
            <Slot key={i} $w={t.w}>
              <Tool $arrow={t.arrow} $on={t.on} $latin={t.latin} disabled={t.disabled}>
                {icons[t.icon]}
                {t.label}
                {t.arrow && <ToolCaret />}
              </Tool>
              {t.on === "menu" && (
                <Menu>
                  {menuItems.map(([icon, label]) => (
                    <MenuItem key={label} $hot={icon === "csys"}>
                      {icons[icon]}
                      {label}
                    </MenuItem>
                  ))}
                </Menu>
              )}
            </Slot>
          )
        )}
      </Ribbon>

      <Body>
        <Tabs>
          {tabs.map(([label, w, latin]) => (
            <Tab key={label} $w={w} $latin={latin} role="tab" aria-selected={tab === label} onClick={() => setTab(label)}>
              {label}
            </Tab>
          ))}
          <ClippedTab $w={132} $latin role="tab" aria-selected={false}>
            SOLIDWORKS CAM
          </ClippedTab>
        </Tabs>

        <HeadsUp>
          {viewTools.map(([icon, title, mode]) => (
            <React.Fragment key={icon}>
              <ViewTool $on={mode === "on"} aria-label={title}>
                {icons[icon]}
              </ViewTool>
              {mode && (
                <ViewCaret $on={mode === "on"} aria-label={title + "菜单"}>
                  <Caret $color="#8f8f8f" />
                </ViewCaret>
              )}
            </React.Fragment>
          ))}
        </HeadsUp>

        <Sidebar>
          <Grip>
            <Dot />
          </Grip>
          <PanelTabs>
            {["assembly", "properties", "config", "target", "appearance", "wire", "printer", "mill"].map((name, i) => (
              <PanelTab key={name} $on={i === 0} aria-label={name}>
                {icons[name]}
              </PanelTab>
            ))}
            <More aria-label="more">
              <svg width="12" height="12" viewBox="0 0 12 12" fill="none">
                <path d="M4 1l5 5-5 5" stroke="#777" strokeWidth="2" />
              </svg>
            </More>
          </PanelTabs>
          <Filter>
            {icons.filter}
            <Caret />
            <FilterInput aria-label="filter" />
          </Filter>
          <Tree>
            {tree.map((n) => (
              <Row key={n.label} $root={n.root}>
                {!n.root && <Expand $show={n.open} />}
                <Node
                  $root={n.root}
                  $warn={n.warn}
                  $latin={n.latin}
                  $selected={selected === n.label}
                  onClick={() => setSelected(n.label)}
                >
                  {icons[n.icon]}
                  {n.warn && icons.warn}
                  {n.label}
                </Node>
              </Row>
            ))}
          </Tree>
          <Handle aria-label="collapse">
            <Dot />
          </Handle>
        </Sidebar>

        <Viewport>
          <Crumbs>
            <CrumbRoot aria-label="robot_yes">{icons.assemblySmall}</CrumbRoot>
            <Crumb>
              {icons.point}
              base_link_point1
            </Crumb>
          </Crumbs>
        </Viewport>
        <Model />
        <Mark $x={22} $y={399} $w={192} $h={48} />
        <Watermark>CSDN @嘿！贝雷帽</Watermark>
      </Body>
      <Mark $x={564} $y={167} $w={312} $h={58} />
    </Page>
  );
}

export default App;
